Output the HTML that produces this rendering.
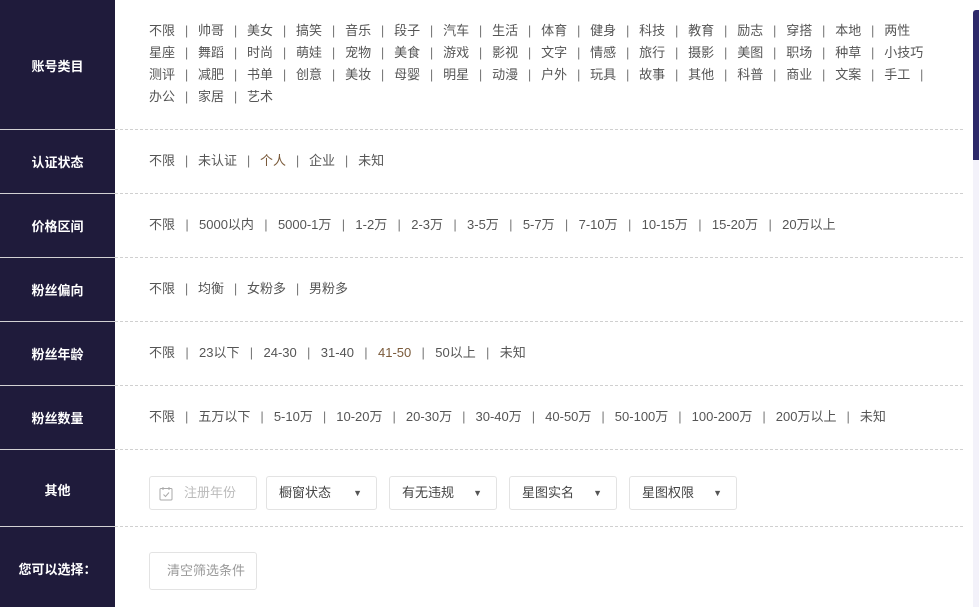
<!DOCTYPE html>
<html><head><meta charset="utf-8"><style>
*{margin:0;padding:0;box-sizing:border-box}
body{width:979px;height:607px;overflow:hidden;background:#fff;font-family:"Liberation Sans","Noto Sans CJK SC",sans-serif;font-size:13px;color:#555;position:relative}
.side{position:absolute;left:0;top:0;width:115px;height:607px;background:#1f1b3b}
.lab{position:absolute;left:0;width:115px;text-align:center;color:#fff;font-weight:bold;font-size:13px}
.sideline{position:absolute;left:0;width:115px;border-top:1px solid #e5e5e5;opacity:.9}
.dash{position:absolute;left:115px;width:848px;border-top:1px dashed #d0d0d0}
.row{position:absolute;left:149px;white-space:nowrap;line-height:22px}
.s{display:inline-block;width:23px;text-align:center;color:#777;font-family:"Liberation Sans",sans-serif}
.n .s{width:24px}
.n2 .s{width:23.4px}
.sel{position:absolute;top:476px;height:34px;border:1px solid #e3e3e3;border-radius:3px;line-height:32px;padding-left:12px;color:#444}
.sel i{position:absolute;right:14px;top:0;font-style:normal;font-size:9px;color:#555}
.sb{position:absolute;left:973px;top:10px;width:6px;height:597px;background:#f3f2fa}
.sb div{width:6px;height:150px;background:#2e2a6b;border-radius:3px 0 0 0}
</style></head><body>
<div class="side"></div>
<div class="lab" style="top:56px">账号类目</div>
<div class="lab" style="top:152px">认证状态</div>
<div class="lab" style="top:216px">价格区间</div>
<div class="lab" style="top:280px">粉丝偏向</div>
<div class="lab" style="top:344px">粉丝年龄</div>
<div class="lab" style="top:408px">粉丝数量</div>
<div class="lab" style="top:480px">其他</div>
<div class="lab" style="top:559px">您可以选择：</div>
<div class="sideline" style="top:129px"></div>
<div class="sideline" style="top:193px"></div>
<div class="sideline" style="top:257px"></div>
<div class="sideline" style="top:321px"></div>
<div class="sideline" style="top:385px"></div>
<div class="sideline" style="top:449px"></div>
<div class="sideline" style="top:526px"></div>
<div class="dash" style="top:129px"></div>
<div class="dash" style="top:193px"></div>
<div class="dash" style="top:257px"></div>
<div class="dash" style="top:321px"></div>
<div class="dash" style="top:385px"></div>
<div class="dash" style="top:449px"></div>
<div class="dash" style="top:526px"></div>

<div class="row" style="top:20px">
<div>不限<span class="s">|</span>帅哥<span class="s">|</span>美女<span class="s">|</span>搞笑<span class="s">|</span>音乐<span class="s">|</span>段子<span class="s">|</span>汽车<span class="s">|</span>生活<span class="s">|</span>体育<span class="s">|</span>健身<span class="s">|</span>科技<span class="s">|</span>教育<span class="s">|</span>励志<span class="s">|</span>穿搭<span class="s">|</span>本地<span class="s">|</span>两性</div>
<div>星座<span class="s">|</span>舞蹈<span class="s">|</span>时尚<span class="s">|</span>萌娃<span class="s">|</span>宠物<span class="s">|</span>美食<span class="s">|</span>游戏<span class="s">|</span>影视<span class="s">|</span>文字<span class="s">|</span>情感<span class="s">|</span>旅行<span class="s">|</span>摄影<span class="s">|</span>美图<span class="s">|</span>职场<span class="s">|</span>种草<span class="s">|</span>小技巧</div>
<div>测评<span class="s">|</span>减肥<span class="s">|</span>书单<span class="s">|</span>创意<span class="s">|</span>美妆<span class="s">|</span>母婴<span class="s">|</span>明星<span class="s">|</span>动漫<span class="s">|</span>户外<span class="s">|</span>玩具<span class="s">|</span>故事<span class="s">|</span>其他<span class="s">|</span>科普<span class="s">|</span>商业<span class="s">|</span>文案<span class="s">|</span>手工<span class="s">|</span></div>
<div>办公<span class="s">|</span>家居<span class="s">|</span>艺术</div>
</div>
<div class="row" style="top:150px">不限<span class="s">|</span>未认证<span class="s">|</span><span style="color:#7a5a3a">个人</span><span class="s">|</span>企业<span class="s">|</span>未知</div>
<div class="row n" style="top:214px">不限<span class="s">|</span>5000以内<span class="s">|</span>5000-1万<span class="s">|</span>1-2万<span class="s">|</span>2-3万<span class="s">|</span>3-5万<span class="s">|</span>5-7万<span class="s">|</span>7-10万<span class="s">|</span>10-15万<span class="s">|</span>15-20万<span class="s">|</span>20万以上</div>
<div class="row" style="top:278px">不限<span class="s">|</span>均衡<span class="s">|</span>女粉多<span class="s">|</span>男粉多</div>
<div class="row n" style="top:342px">不限<span class="s">|</span>23以下<span class="s">|</span>24-30<span class="s">|</span>31-40<span class="s">|</span><span style="color:#7a5a3a">41-50</span><span class="s">|</span>50以上<span class="s">|</span>未知</div>
<div class="row n2" style="top:406px">不限<span class="s">|</span>五万以下<span class="s">|</span>5-10万<span class="s">|</span>10-20万<span class="s">|</span>20-30万<span class="s">|</span>30-40万<span class="s">|</span>40-50万<span class="s">|</span>50-100万<span class="s">|</span>100-200万<span class="s">|</span>200万以上<span class="s">|</span>未知</div>

<div class="sel" style="left:149px;width:108px;padding-left:34px;color:#bbb">
<svg style="position:absolute;left:9px;top:9px" width="14" height="15" viewBox="0 0 14 15"><rect x="1" y="2.5" width="12" height="11.5" rx="1" fill="none" stroke="#aaa"/><path d="M4 1v3M10 1v3M4.5 8.5l2 2 3.5-4" fill="none" stroke="#aaa"/></svg>注册年份</div>
<div class="sel" style="left:266px;width:111px">橱窗状态<i>▼</i></div>
<div class="sel" style="left:389px;width:108px">有无违规<i>▼</i></div>
<div class="sel" style="left:509px;width:108px">星图实名<i>▼</i></div>
<div class="sel" style="left:629px;width:108px">星图权限<i>▼</i></div>
<div class="sel" style="left:149px;top:552px;width:108px;height:38px;line-height:36px;padding-left:17px;color:#999">清空筛选条件</div>
<div class="sb"><div></div></div>
</body></html>
